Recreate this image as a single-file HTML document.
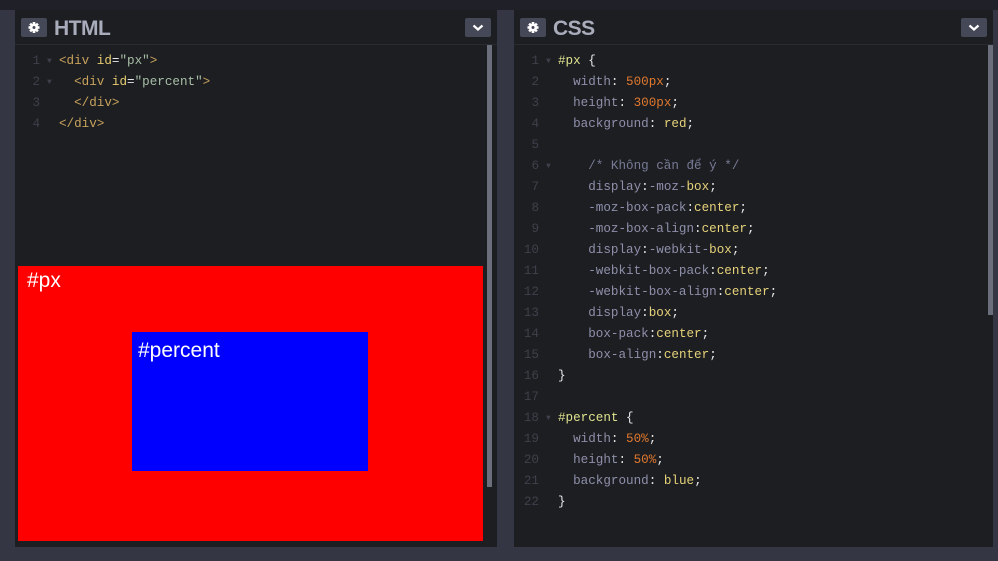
<!DOCTYPE html>
<html><head><meta charset="utf-8"><style>
*{margin:0;padding:0;box-sizing:border-box}
body{width:998px;height:561px;background:#343643;position:relative;overflow:hidden;font-family:"Liberation Sans",sans-serif}
.top{position:absolute;left:0;top:0;width:998px;height:10px;background:#1f2028}
.panel{position:absolute;top:10px;height:537px;background:#1d1e22}
.hdr{position:absolute;left:0;top:0;right:0;height:35px;border-bottom:1px solid #2a2b31}
.gear{position:absolute;left:6px;top:8px;width:26px;height:19px;background:#444857;border-radius:2px}
.title{position:absolute;left:39px;top:7px;font-size:21px;font-weight:bold;color:#a9acbb;letter-spacing:-0.5px}
.dd{position:absolute;right:6px;top:8px;width:26px;height:19px;background:#444857;border-radius:2px}
.code{position:absolute;left:0;top:41px;font-family:"Liberation Mono",monospace;font-size:12.6px;line-height:21px;white-space:pre}
.ln{position:absolute;width:25px;text-align:right;color:#3e404b}
.fold{position:absolute;left:32px;color:#3e404b;font-size:8px}
.l{position:absolute;left:44px}
.tg{color:#c9a35c}.at{color:#e7cd6f}.st{color:#a8bfa7}.pr{color:#8e90ab}.nu{color:#e0782e}.kw{color:#e6d27a}.sel{color:#dfe38e}.cm{color:#777b95}.w{color:#e8e8e8}
.sb{position:absolute;width:5px;background:#6b6e7b}
</style></head><body>
<div class="top"></div>
<div class="panel" style="left:15px;width:482px">
 <div class="hdr"><div class="gear"><svg width="26" height="19"><g transform="translate(13,9.5)" fill="#fff"><circle r="4"/><rect x="-1.3" y="-5.5" width="2.6" height="11"/><rect x="-5.5" y="-1.3" width="11" height="2.6"/><rect x="-1.3" y="-5.5" width="2.6" height="11" transform="rotate(45)"/><rect x="-1.3" y="-5.5" width="2.6" height="11" transform="rotate(-45)"/><circle r="1.5" fill="#444857"/></g></svg></div><div class="title">HTML</div><div class="dd"><svg width="26" height="19"><path d="M8.5 7.5 L13 11.5 L17.5 7.5" stroke="#fff" stroke-width="2.2" fill="none"/></svg></div></div>
 <div class="code">
  <div class="ln" style="top:0">1</div><span class="fold" style="top:0">▼</span><div class="l" style="top:0"><span class="tg">&lt;div</span> <span class="at">id</span><span class="w">=</span><span class="st">"px"</span><span class="tg">&gt;</span></div>
  <div class="ln" style="top:21px">2</div><span class="fold" style="top:21px">▼</span><div class="l" style="top:21px">  <span class="tg">&lt;div</span> <span class="at">id</span><span class="w">=</span><span class="st">"percent"</span><span class="tg">&gt;</span></div>
  <div class="ln" style="top:42px">3</div><div class="l" style="top:42px">  <span class="tg">&lt;/div&gt;</span></div>
  <div class="ln" style="top:63px">4</div><div class="l" style="top:63px"><span class="tg">&lt;/div&gt;</span></div>
 </div>
 <div style="position:absolute;left:3px;top:256px;width:465px;height:275px;background:#f00">
  <div style="position:absolute;left:9px;top:3px;color:#fff;font-size:21px">#px</div>
  <div style="position:absolute;left:114px;top:66px;width:236px;height:139px;background:#00f"><div style="position:absolute;left:6px;top:7px;color:#fff;font-size:21px">#percent</div></div>
 </div>
 <div class="sb" style="left:472px;top:35px;height:442px"></div>
</div>
<div class="panel" style="left:514px;width:479px">
 <div class="hdr"><div class="gear"><svg width="26" height="19"><g transform="translate(13,9.5)" fill="#fff"><circle r="4"/><rect x="-1.3" y="-5.5" width="2.6" height="11"/><rect x="-5.5" y="-1.3" width="11" height="2.6"/><rect x="-1.3" y="-5.5" width="2.6" height="11" transform="rotate(45)"/><rect x="-1.3" y="-5.5" width="2.6" height="11" transform="rotate(-45)"/><circle r="1.5" fill="#444857"/></g></svg></div><div class="title">CSS</div><div class="dd"><svg width="26" height="19"><path d="M8.5 7.5 L13 11.5 L17.5 7.5" stroke="#fff" stroke-width="2.2" fill="none"/></svg></div></div>
 <div class="code">
  <div class="ln" style="top:0">1</div><span class="fold" style="top:0">▼</span><div class="l" style="top:0"><span class="sel">#px</span> <span class="w">{</span></div>
  <div class="ln" style="top:21px">2</div><div class="l" style="top:21px">  <span class="pr">width</span><span class="w">:</span> <span class="nu">500px</span><span class="w">;</span></div>
  <div class="ln" style="top:42px">3</div><div class="l" style="top:42px">  <span class="pr">height</span><span class="w">:</span> <span class="nu">300px</span><span class="w">;</span></div>
  <div class="ln" style="top:63px">4</div><div class="l" style="top:63px">  <span class="pr">background</span><span class="w">:</span> <span class="kw">red</span><span class="w">;</span></div>
  <div class="ln" style="top:84px">5</div>
  <div class="ln" style="top:105px">6</div><span class="fold" style="top:105px">▼</span><div class="l" style="top:105px">    <span class="cm">/* Không cần để ý */</span></div>
  <div class="ln" style="top:126px">7</div><div class="l" style="top:126px">    <span class="pr">display</span><span class="w">:</span><span class="pr">-moz-</span><span class="kw">box</span><span class="w">;</span></div>
  <div class="ln" style="top:147px">8</div><div class="l" style="top:147px">    <span class="pr">-moz-box-pack</span><span class="w">:</span><span class="kw">center</span><span class="w">;</span></div>
  <div class="ln" style="top:168px">9</div><div class="l" style="top:168px">    <span class="pr">-moz-box-align</span><span class="w">:</span><span class="kw">center</span><span class="w">;</span></div>
  <div class="ln" style="top:189px">10</div><div class="l" style="top:189px">    <span class="pr">display</span><span class="w">:</span><span class="pr">-webkit-</span><span class="kw">box</span><span class="w">;</span></div>
  <div class="ln" style="top:210px">11</div><div class="l" style="top:210px">    <span class="pr">-webkit-box-pack</span><span class="w">:</span><span class="kw">center</span><span class="w">;</span></div>
  <div class="ln" style="top:231px">12</div><div class="l" style="top:231px">    <span class="pr">-webkit-box-align</span><span class="w">:</span><span class="kw">center</span><span class="w">;</span></div>
  <div class="ln" style="top:252px">13</div><div class="l" style="top:252px">    <span class="pr">display</span><span class="w">:</span><span class="kw">box</span><span class="w">;</span></div>
  <div class="ln" style="top:273px">14</div><div class="l" style="top:273px">    <span class="pr">box-pack</span><span class="w">:</span><span class="kw">center</span><span class="w">;</span></div>
  <div class="ln" style="top:294px">15</div><div class="l" style="top:294px">    <span class="pr">box-align</span><span class="w">:</span><span class="kw">center</span><span class="w">;</span></div>
  <div class="ln" style="top:315px">16</div><div class="l" style="top:315px"><span class="w">}</span></div>
  <div class="ln" style="top:336px">17</div>
  <div class="ln" style="top:357px">18</div><span class="fold" style="top:357px">▼</span><div class="l" style="top:357px"><span class="sel">#percent</span> <span class="w">{</span></div>
  <div class="ln" style="top:378px">19</div><div class="l" style="top:378px">  <span class="pr">width</span><span class="w">:</span> <span class="nu">50%</span><span class="w">;</span></div>
  <div class="ln" style="top:399px">20</div><div class="l" style="top:399px">  <span class="pr">height</span><span class="w">:</span> <span class="nu">50%</span><span class="w">;</span></div>
  <div class="ln" style="top:420px">21</div><div class="l" style="top:420px">  <span class="pr">background</span><span class="w">:</span> <span class="kw">blue</span><span class="w">;</span></div>
  <div class="ln" style="top:441px">22</div><div class="l" style="top:441px"><span class="w">}</span></div>
 </div>
 <div class="sb" style="left:474px;top:35px;height:270px"></div>
</div>
</body></html>
